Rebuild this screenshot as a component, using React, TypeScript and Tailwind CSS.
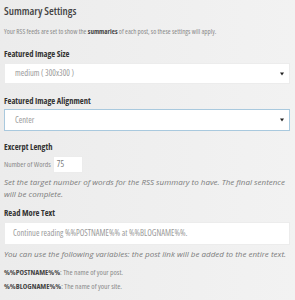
const cond = "[font-family:'Open_Sans',sans-serif] [font-stretch:condensed]";

const Label = ({ children, className = "" }: { children: React.ReactNode; className?: string }) => (
  <div className={`${cond} text-[8.5px] leading-[12px] font-bold text-[#333] ${className}`}>{children}</div>
);

const Caret = () => (
  <svg width="4" height="4" viewBox="0 0 4 4" className="shrink-0">
    <path d="M0 0.5h4L2 3.5z" fill="#222" />
  </svg>
);

const SelectBox = ({ value, focused, className = "" }: { value: string; focused?: boolean; className?: string }) => (
  <div
    className={`flex items-center justify-between bg-white pl-[10px] pr-[5px] ${
      focused ? "h-[22px] border border-[#a9c9de]" : "h-[21px] border border-[#ececec]"
    } ${className}`}
  >
    <span className={`${cond} text-[8.5px] text-[#9a9a9a]`}>{value}</span>
    <Caret />
  </div>
);

const Note = ({ children, className = "" }: { children: React.ReactNode; className?: string }) => (
  <p className={`[font-family:'Open_Sans',sans-serif] italic text-[8px] leading-[12px] text-[#7b7b7b] ${className}`}>
    {children}
  </p>
);

export default function App() {
  return (
    <div className="w-[295px] h-[300px] overflow-hidden bg-gradient-to-r from-[#ececec] to-[#f2f2f2] px-[4px] pt-[4px]">
      <h2 className={`${cond} text-[11px] leading-[14px] font-semibold text-[#444]`}>Summary Settings</h2>
      <p className={`${cond} mt-[9px] text-[7px] leading-[10px] text-[#8a8a8a]`}>
        Your RSS feeds are set to show the <b className="font-bold text-[#444]">summaries</b> of each post, so these
        settings will apply.
      </p>

      <Label className="mt-[11px]">Featured Image Size</Label>
      <SelectBox className="mt-[3px] w-[286px]" value="medium ( 300x300 )" />

      <Label className="mt-[11px]">Featured Image Alignment</Label>
      <SelectBox className="mt-[2px] w-[286px]" value="Center" focused />

      <Label className="mt-[10px]">Excerpt Length</Label>
      <div className="mt-[3px] flex items-center gap-[2px]">
        <span className={`${cond} text-[7.6px] text-[#8a8a8a]`}>Number of Words</span>
        <div className="flex h-[17px] w-[30px] items-center bg-white pl-[3px] border border-[#ececec]">
          <span className={`${cond} text-[8.5px] text-[#777]`}>75</span>
        </div>
      </div>
      <Note className="mt-[3px]">
        Set the target number of words for the RSS summary to have. The final sentence will be complete.
      </Note>

      <Label className="mt-[7px]">Read More Text</Label>
      <div className="mt-[3px] flex h-[23px] w-[286px] items-center bg-white pl-[8px] border border-[#ececec]">
        <span className={`${cond} text-[8.5px] text-[#9a9a9a]`}>Continue reading %%POSTNAME%% at %%BLOGNAME%%.</span>
      </div>
      <Note className="mt-[3px] whitespace-nowrap">
        You can use the following variables: the post link will be added to the entire text.
      </Note>

      <div className={`${cond} mt-[7px] text-[7.6px] leading-[10px] text-[#8a8a8a]`}>
        <b className="font-bold text-[#444]">%%POSTNAME%%</b>: The name of your post.
      </div>
      <div className={`${cond} mt-[4px] text-[7.6px] leading-[10px] text-[#8a8a8a]`}>
        <b className="font-bold text-[#444]">%%BLOGNAME%%</b>: The name of your site.
      </div>
    </div>
  );
}
